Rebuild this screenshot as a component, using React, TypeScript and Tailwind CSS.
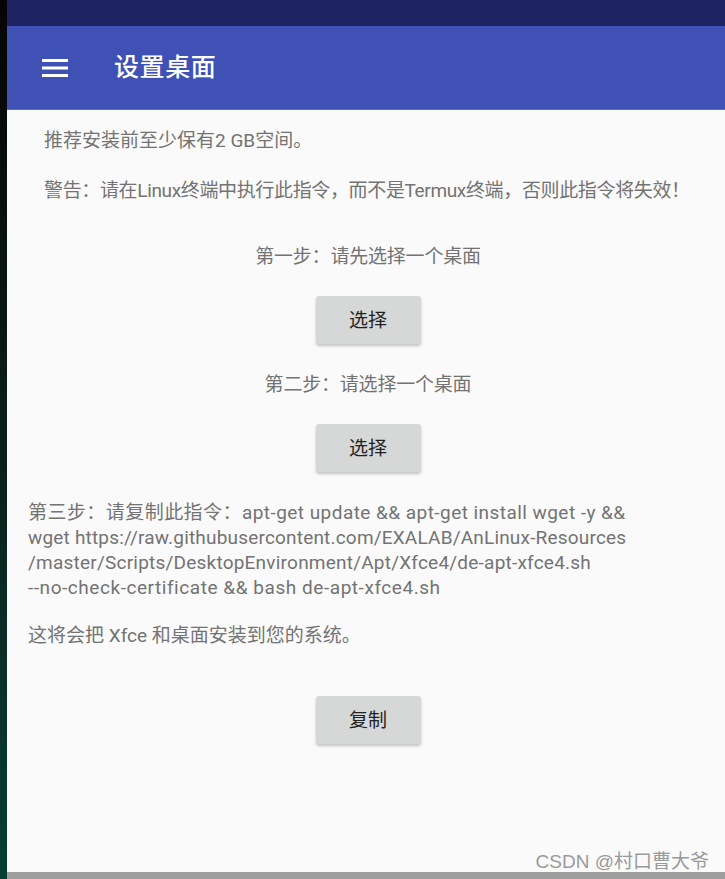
import React from 'react';

const font = { fontFamily: "Roboto, 'Noto Sans CJK SC', sans-serif" };

const GrayButton: React.FC<{ label: string }> = ({ label }) => (
  <button className="w-[105px] h-[48px] rounded-[3px] bg-[#d6d7d7] text-[19px] text-[#222] shadow-[0_2px_3px_rgba(0,0,0,0.22)] flex items-center justify-center">
    {label}
  </button>
);

export default function App() {
  return (
    <div className="relative flex h-[879px] w-[725px] overflow-hidden bg-[#fafafa]" style={font}>
      {/* left edge strip */}
      <div className="w-[7px] shrink-0 bg-gradient-to-b from-[#050505] via-[#0a1f1a] to-[#063f33]" />

      <div className="flex flex-1 flex-col">
        {/* status bar */}
        <div className="h-[26px] bg-[#1e2461]" />

        {/* app bar */}
        <div className="flex h-[84px] items-center bg-[#3f51b5] border-b border-[#5c6bc8]">
          <svg className="ml-[35px]" width="26" height="20" viewBox="0 0 26 20">
            <rect x="0" y="1" width="26" height="3" fill="#fff" />
            <rect x="0" y="8.5" width="26" height="3" fill="#fff" />
            <rect x="0" y="16" width="26" height="3" fill="#fff" />
          </svg>
          <h1 className="ml-[46px] text-[25px] font-medium tracking-[0.6px] text-white">设置桌面</h1>
        </div>

        {/* content */}
        <div className="flex flex-1 flex-col text-[19px] leading-[25px] text-[#737373]">
          <p className="mt-[18px] pl-[37px]">推荐安装前至少保有2 GB空间。</p>
          <p className="mt-[25px] pl-[37px] tracking-[-0.35px]">
            警告：请在Linux终端中执行此指令，而不是Termux终端，否则此指令将失效！
          </p>

          <p className="mt-[41px] pl-[4px] text-center tracking-[-0.2px]">第一步：请先选择一个桌面</p>
          <div className="mt-[27px] flex justify-center pl-[4px]">
            <GrayButton label="选择" />
          </div>

          <p className="mt-[28px] pl-[4px] text-center tracking-[-0.2px]">第二步：请选择一个桌面</p>
          <div className="mt-[27px] flex justify-center pl-[4px]">
            <GrayButton label="选择" />
          </div>

          <div className="mt-[28px] pl-[21px]">
            <p className="tracking-[0.45px]">第三步：请复制此指令：apt-get update &amp;&amp; apt-get install wget -y &amp;&amp;</p>
            <p className="tracking-[0.19px]">wget https://raw.githubusercontent.com/EXALAB/AnLinux-Resources</p>
            <p className="tracking-[0.22px]">/master/Scripts/DesktopEnvironment/Apt/Xfce4/de-apt-xfce4.sh</p>
            <p className="tracking-[0.55px]">--no-check-certificate &amp;&amp; bash de-apt-xfce4.sh</p>
          </div>

          <p className="mt-[23px] pl-[21px]">这将会把 Xfce 和桌面安装到您的系统。</p>

          <div className="mt-[48px] flex justify-center pl-[4px]">
            <GrayButton label="复制" />
          </div>
        </div>

        {/* bottom bar */}
        <div className="h-[7px] bg-[#9e9e9e]" />
      </div>

      {/* watermark */}
      <span
        className="absolute right-[16px] bottom-[8px] text-[19px] leading-none text-[#9a9a9a]"
        style={{ fontFamily: "'Liberation Sans', 'Noto Sans CJK SC', sans-serif" }}
      >
        CSDN @村口曹大爷
      </span>
    </div>
  );
}
